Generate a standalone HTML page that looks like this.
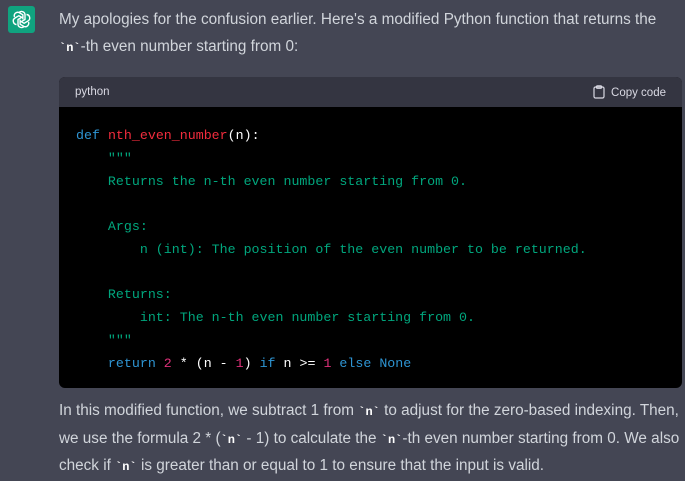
<!DOCTYPE html>
<html><head><style>
body{margin:0;width:685px;height:481px;background:#444654;overflow:hidden;font-family:"Liberation Sans",sans-serif;color:#d1d5db;position:relative}
.t{position:absolute;left:59px;font-size:15.3px;white-space:nowrap;letter-spacing:0}
code{font-family:"Liberation Mono",monospace;font-weight:bold;color:#fff;font-size:12px}
.logo{position:absolute;left:8px;top:6px;width:27px;height:27px;background:#10a37f;border-radius:3px}
.box{position:absolute;left:59px;top:77px;width:623px;height:311px;background:#000;border-radius:6px;overflow:hidden}
.hd{height:30px;background:#343541;font-size:11.5px;color:#d9d9e3;position:relative}
.hd span{position:absolute;top:9px}
pre{margin:0;position:absolute;left:17px;top:48px;font-family:"Liberation Mono",monospace;font-size:13.3px;line-height:22.75px;color:#fff}
.k{color:#2e95d3}.f{color:#f22c3d}.s{color:#00a67d}.n{color:#df3079}
</style></head><body>
<div class="logo"><svg width="27" height="27" viewBox="0 0 27 27"><g fill="none" stroke="#fff" stroke-width="1.4" stroke-linejoin="round"><path d="M11 6.5a3.5 3.5 0 0 1 6 2.5v4.5l-4 2.3M18.5 8.5a3.5 3.5 0 0 1 1.5 6.5l-3.9 2.3-4-2.3M20.5 16a3.5 3.5 0 0 1-4.5 4.5l-3.9-2.3v-4.6M16 20.5a3.5 3.5 0 0 1-6-2.5v-4.5l4-2.3M8.5 18.5a3.5 3.5 0 0 1-1.5-6.5l3.9-2.3 4 2.3M6.5 11a3.5 3.5 0 0 1 4.5-4.5l3.9 2.3v4.6"/></g></svg></div>
<div class="t" style="top:11px">My apologies for the confusion earlier. Here's a modified Python function that returns the</div>
<div class="t" style="top:38px"><code>`n`</code>-th even number starting from 0:</div>
<div class="box">
<div class="hd"><span style="left:16px">python</span><span style="right:16px;top:8px"><svg width="12" height="14" viewBox="0 0 12 14" style="vertical-align:-3px;margin-right:6px"><rect x="1" y="2" width="10" height="11" rx="1.5" fill="none" stroke="#d9d9e3" stroke-width="1.2"/><rect x="3.5" y="0.8" width="5" height="2.5" rx="0.8" fill="none" stroke="#d9d9e3" stroke-width="1.2"/></svg>Copy code</span></div>
<pre><span class="k">def</span> <span class="f">nth_even_number</span>(n):
    <span class="s">"""</span>
<span class="s">    Returns the n-th even number starting from 0.</span>

<span class="s">    Args:</span>
<span class="s">        n (int): The position of the even number to be returned.</span>

<span class="s">    Returns:</span>
<span class="s">        int: The n-th even number starting from 0.</span>
<span class="s">    """</span>
    <span class="k">return</span> <span class="n">2</span> * (n - <span class="n">1</span>) <span class="k">if</span> n &gt;= <span class="n">1</span> <span class="k">else</span> <span class="k">None</span></pre>
</div>
<div class="t" style="top:402px">In this modified function, we subtract 1 from <code>`n`</code> to adjust for the zero-based indexing. Then,</div>
<div class="t" style="top:430px">we use the formula 2 * (<code>`n`</code> - 1) to calculate the <code>`n`</code>-th even number starting from 0. We also</div>
<div class="t" style="top:457px">check if <code>`n`</code> is greater than or equal to 1 to ensure that the input is valid.</div>
</body></html>
